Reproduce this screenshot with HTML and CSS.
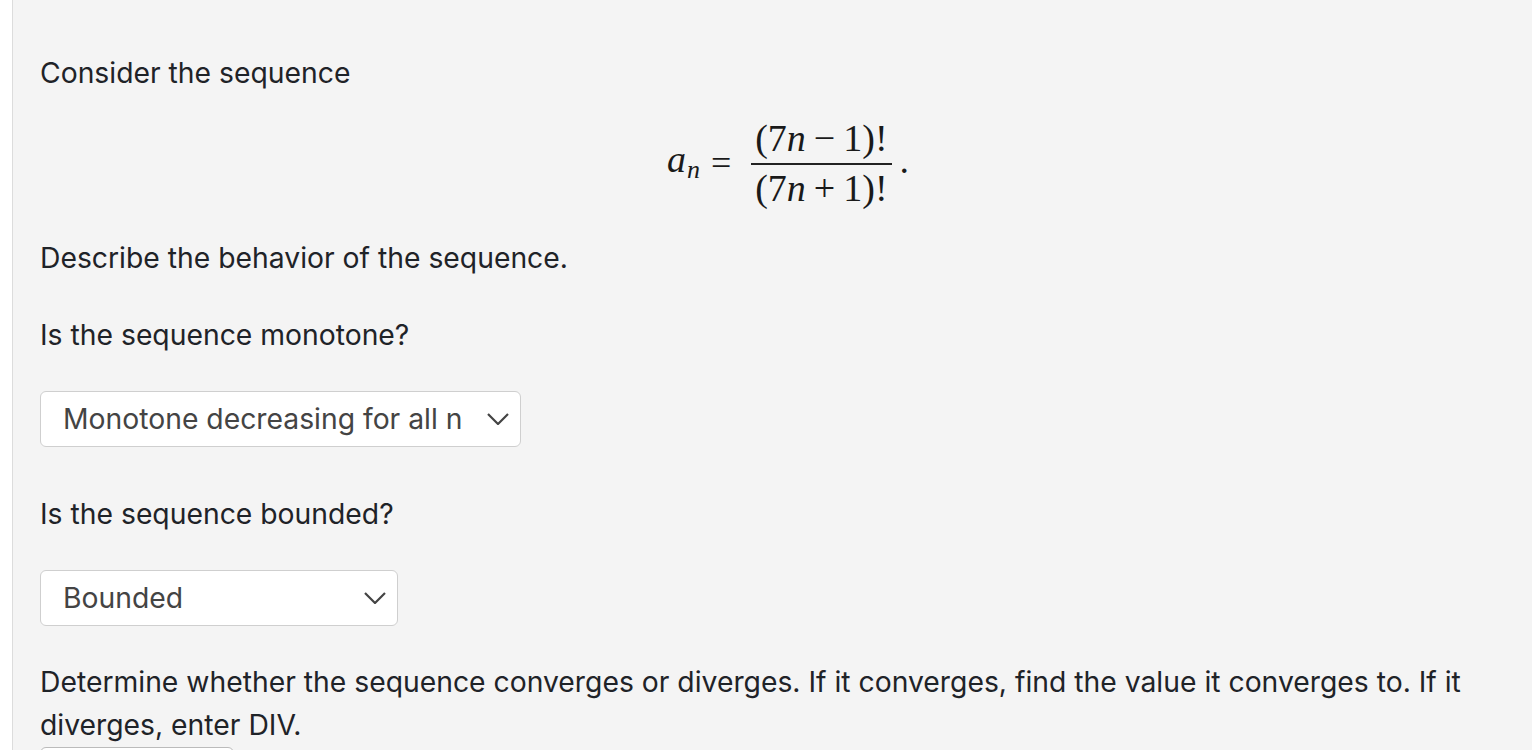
FILE: index.html
```html
<!DOCTYPE html>
<html lang="en">
<head>
    <meta charset="UTF-8">
    <meta name="viewport" content="width=device-width, initial-scale=1.0">
    <title>Sequence Question</title>
    <link rel="stylesheet" href="styles.css">
</head>
<body>

    <div class="question">
        <p class="intro">Consider the sequence</p>

        <!-- display math -->
        <div class="math">
            <span class="lhs"><i>a</i><sub><i>n</i></sub></span>
            <span class="eq">=</span>
            <span class="frac">
                <span class="num">(7<i>n</i><span class="op">&minus;</span>1)!</span>
                <span class="den">(7<i>n</i><span class="op">+</span>1)!</span>
            </span>
            <span class="dot">.</span>
        </div>

        <p class="describe">Describe the behavior of the sequence.</p>

        <p class="ask">Is the sequence monotone?</p>
        <div class="select select-wide">
            <span>Monotone decreasing for all n</span>
            <svg class="chev" width="22" height="12" viewBox="0 0 22 12"><path d="M1 1 L11 11 L21 1" fill="none" stroke="#444" stroke-width="2.2"/></svg>
        </div>

        <p class="ask ask-second">Is the sequence bounded?</p>
        <div class="select select-narrow">
            <span>Bounded</span>
            <svg class="chev" width="22" height="12" viewBox="0 0 22 12"><path d="M1 1 L11 11 L21 1" fill="none" stroke="#444" stroke-width="2.2"/></svg>
        </div>

        <p class="last">Determine whether the sequence converges or diverges. If it converges, find the value it converges to. If it diverges, enter DIV.</p>
        <div class="answer-box"></div>
    </div>

</body>
</html>
```

FILE: styles.css
```css
body {
    margin: 0;
    background-color: #fff;
    font-family: Inter, "Noto Sans", sans-serif;
    color: #1f2328;
}
.question {
    margin-left: 12px;
    border-left: 1px solid #dcdcdc;
    background-color: #f4f4f4;
    padding: 52px 40px 0 27px;
    min-height: 750px;
    box-sizing: border-box;
    font-size: 28.3px;
    line-height: 43px;
}
p {
    margin: 0;
}

/* math */
.math {
    display: flex;
    justify-content: center;
    align-items: center;
    font-family: "Liberation Serif", "DejaVu Serif", serif;
    font-size: 38px;
    color: #1a1a1a;
    height: 136px;
    margin: 0 0 6px 0;
    padding-left: 44px;
}
.lhs {
    font-size: 38px;
    line-height: 38px;
    margin-top: 2px;
}
.lhs sub {
    font-size: 26px;
    vertical-align: -6px;
    margin-left: 1px;
}
.eq {
    margin: 0 20px 0 11px;
    font-size: 36px;
}
.frac {
    display: flex;
    flex-direction: column;
    align-items: center;
}
.num, .den {
    padding: 0 4px;
    line-height: 42px;
}
.num {
    border-bottom: 2px solid #222;
    padding-bottom: 4px;
}
.den {
    padding-top: 2px;
}
.op {
    margin: 0 8px;
}
.dot {
    line-height: 20px;
    margin: -6px 0 0 8px;
}

.describe {
    margin-bottom: 34px;
}
.ask {
    margin-bottom: 34px;
}
.ask-second {
    margin-top: 46px;
}

/* dropdowns */
.select {
    display: flex;
    justify-content: space-between;
    align-items: center;
    box-sizing: border-box;
    height: 56px;
    padding: 0 11px 0 22px;
    background-color: #fff;
    border: 1px solid #cfcfcf;
    border-radius: 6px;
    color: #444;
}
.select-wide {
    width: 481px;
}
.select-narrow {
    width: 358px;
}
.chev {
    display: block;
}

.last {
    margin-top: 35px;
}
.answer-box {
    width: 192px;
    height: 40px;
    border: 1px solid #bbb;
    border-radius: 6px;
    background-color: #fff;
}
```
